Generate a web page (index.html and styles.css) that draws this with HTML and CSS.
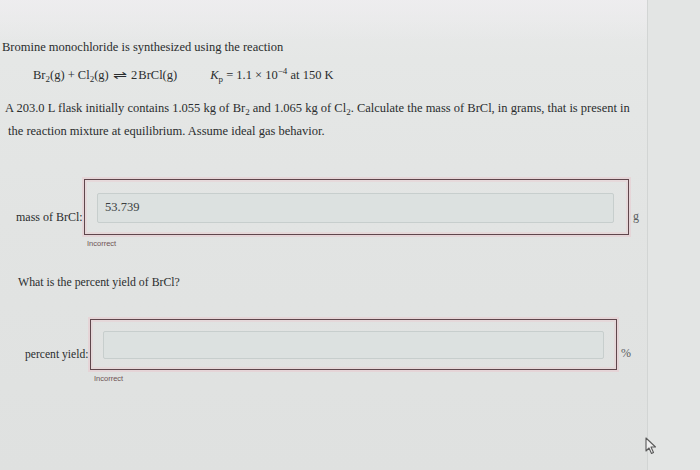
FILE: index.html
```html
<!DOCTYPE html>
<html>
<head>
<meta charset="utf-8">
<link rel="stylesheet" href="styles.css">
</head>
<body>
<div class="screen">
  <div class="topband"></div>
  <div class="divider"></div>
  <main class="content">
    <p class="intro">Bromine monochloride is synthesized using the reaction</p>
    <p class="equation">
      <span>Br<sub>2</sub>(g) + Cl<sub>2</sub>(g) <span class="eqarrow">&#x21CC;</span> 2&#8202;BrCl(g)</span>
      <span class="kp"><i>K</i><sub>p</sub> = 1.1 &times; 10<sup>&minus;4</sup> at 150 K</span>
    </p>
    <p class="problem">A 203.0 L flask initially contains 1.055 kg of Br<sub>2</sub> and 1.065 kg of Cl<sub>2</sub>. Calculate the mass of BrCl, in grams, that is present in<br><span class="l2">the reaction mixture at equilibrium. Assume ideal gas behavior.</span></p>

    <div class="answer answer-one">
      <div class="row">
        <span class="label">mass of BrCl:</span>
        <div class="box"><div class="field">53.739</div></div>
        <span class="unit">g</span>
      </div>
      <div class="feedback">Incorrect</div>
    </div>

    <p class="question">What is the percent yield of BrCl?</p>

    <div class="answer answer-two">
      <div class="row">
        <span class="label">percent yield:</span>
        <div class="box"><div class="field"></div></div>
        <span class="unit">%</span>
      </div>
      <div class="feedback">Incorrect</div>
    </div>
  </main>
  <svg class="cursor" width="14" height="18" viewBox="0 0 14 18">
    <path d="M2 1 L2 14 L5 11 L7.5 16.5 L9.5 15.5 L7 10 L11.5 10 Z" fill="#f0f0f0" stroke="#5a5a5a" stroke-width="1.1" stroke-linejoin="round"/>
  </svg>
</div>
</body>
</html>
```
FILE: styles.css
```css
html, body {
  margin: 0;
  padding: 0;
}
body {
  width: 700px;
  height: 470px;
  overflow: hidden;
  background: #e2e4e3;
  font-family: "Liberation Serif", "Times New Roman", serif;
  color: #2a2d2e;
}
.screen {
  position: relative;
  width: 700px;
  height: 470px;
  background: linear-gradient(180deg, #e9eaea 0px, #e5e7e6 60px, #e2e4e3 220px, #dfe1e0 470px);
  overflow: hidden;
}
.topband {
  position: absolute;
  left: 0; top: 0; right: 0; height: 40px;
  background: linear-gradient(180deg, rgba(238, 237, 239, 0.9), rgba(233, 234, 234, 0));
}
.divider {
  position: absolute;
  top: 0; bottom: 0; left: 647px; right: 0;
  border-left: 1px solid #d2d5d4;
  background: #e3e5e4;
}
.content {
  position: relative;
  padding: 39px 0 0 0;
}
p { margin: 0; }
sub, sup { font-size: 0.72em; line-height: 0; }
sub { vertical-align: -0.3em; }
sup { vertical-align: 0.55em; }

.intro {
  font-size: 12.5px;
  line-height: 16px;
  padding-left: 2px;
}
.equation {
  font-size: 12.5px;
  line-height: 16px;
  margin-top: 12px;
  padding-left: 33px;
  display: flex;
  gap: 33px;
}
.eqarrow { font-size: 12px; display: inline-block; transform: scaleX(1.4); margin: 0 3px; }
.problem {
  font-size: 12.5px;
  line-height: 23px;
  margin-top: 14px;
  padding-left: 5px;
}
.problem .l2 { padding-left: 3px; }

.answer-one { margin-top: 36px; padding-left: 16px; }
.answer-two { margin-top: 29px; padding-left: 25px; }

.row {
  display: flex;
  align-items: center;
}
.label {
  font-size: 12px;
  padding-top: 20px;
  white-space: nowrap;
  flex-shrink: 0;
}
.answer-one .label { width: 68px; }
.answer-two .label { width: 65px; font-size: 11.6px; }

.box {
  box-sizing: border-box;
  flex-shrink: 0;
  border: 1.5px solid #5f464c;
  box-shadow: 0 0 0 2px rgba(232, 204, 208, 0.6), inset 0 0 0 2px rgba(234, 206, 210, 0.5);
  padding: 13px 14px 11px 12px;
}
.answer-one .box { width: 545px; height: 56px; }
.answer-two .box { width: 527px; height: 51px; padding: 11px 12px 10px 12px; }

.field {
  box-sizing: border-box;
  height: 100%;
  background: #dce1e0;
  border: 1px solid #c7cecd;
  border-radius: 2px;
  font-size: 12.5px;
  line-height: 26px;
  padding-left: 7px;
  color: #3a3e3f;
}
.unit {
  font-size: 12px;
  padding-top: 18px;
  margin-left: 4px;
  color: #5a5d5e;
}
.feedback {
  font-family: "Liberation Sans", Arial, sans-serif;
  font-size: 7.5px;
  color: #6e5254;
  margin-top: 4px;
}
.answer-one .feedback { padding-left: 71px; }
.answer-two .feedback { padding-left: 69px; }

.question {
  font-size: 11.8px;
  line-height: 16px;
  margin-top: 26px;
  padding-left: 18px;
}
.cursor {
  position: absolute;
  left: 644px;
  top: 437px;
}
```
